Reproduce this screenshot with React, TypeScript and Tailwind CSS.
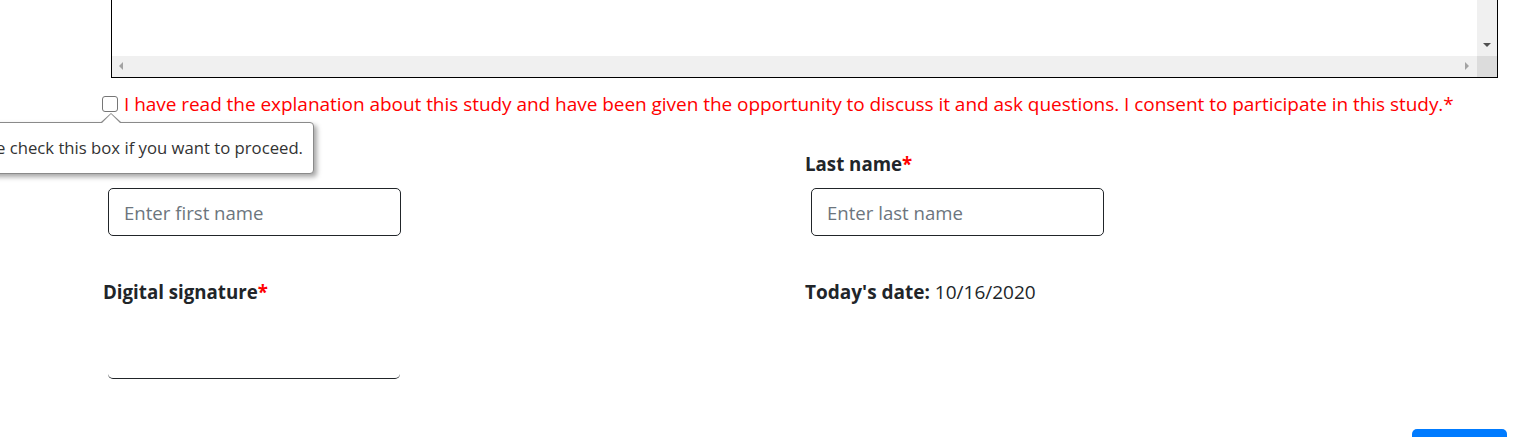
import React from "react";

const font = { fontFamily: '"Open Sans", "Noto Sans", sans-serif' };

const Label = ({ text, required = true }: { text: string; required?: boolean }) => (
  <label className="block h-[30px] text-[18.7px] font-bold leading-[30px] text-[#212529]">
    {text}
    {required && <span className="text-[#ff0000]">*</span>}
  </label>
);

const TextInput = ({ placeholder }: { placeholder: string }) => (
  <input
    type="text"
    placeholder={placeholder}
    className="block h-[48px] w-[293px] rounded-[5px] border border-[#212529] bg-white px-[15px] text-[18.6px] text-[#495057] outline-none placeholder:text-[#6c757d]"
  />
);

export default function App() {
  return (
    <div className="relative h-[437px] w-[1518px] overflow-hidden bg-white" style={font}>
      {/* Study explanation box (scrolled, top off screen) */}
      <div className="ml-[111px] flex h-[78px] w-[1387px] flex-col border-x border-b border-black">
        <div className="flex flex-1">
          <div className="flex-1" />
          <div className="relative w-[20px] bg-[#f0f0f0]">
            <div className="absolute bottom-[9px] left-[6px] h-0 w-0 border-x-[4px] border-t-[4px] border-x-transparent border-t-[#505050]" />
          </div>
        </div>
        <div className="flex h-[21px]">
          <div className="relative flex-1 bg-[#f0f0f0]">
            <div className="absolute left-[7px] top-[6px] h-0 w-0 border-y-[4px] border-r-[4px] border-y-transparent border-r-[#a3a3a3]" />
            <div className="absolute right-[8px] top-[6px] h-0 w-0 border-y-[4px] border-l-[4px] border-y-transparent border-l-[#a3a3a3]" />
          </div>
          <div className="w-[20px] bg-[#dcdcdc]" />
        </div>
      </div>

      {/* Consent checkbox */}
      <div className="mt-[11px] flex h-[30px] items-center pl-[102px]">
        <input
          type="checkbox"
          className="h-[16px] w-[16px] shrink-0 appearance-none rounded-[3px] border border-[#767676] bg-white"
        />
        <span className="ml-[6px] whitespace-nowrap text-[19px] leading-[30px] tracking-[-0.04px] text-[#ff0000]">
          I have read the explanation about this study and have been given the opportunity to discuss it and ask questions. I consent to participate in this study.*
        </span>
      </div>

      {/* Form fields */}
      <div className="mt-[30px] grid grid-cols-[702px_1fr] pl-[103px]">
        <div>
          <Label text="First name" />
          <div className="mt-[9px] pl-[5px]">
            <TextInput placeholder="Enter first name" />
          </div>
        </div>
        <div>
          <Label text="Last name" />
          <div className="mt-[9px] pl-[6px]">
            <TextInput placeholder="Enter last name" />
          </div>
        </div>

        <div className="mt-[41px]">
          <Label text="Digital signature" />
          <div className="mt-[10px] pl-[5px]">
            <div className="h-[62px] w-[292px] rounded-b-[5px] border-b border-[#212529]" />
          </div>
        </div>
        <div className="mt-[41px]">
          <p className="h-[30px] text-[19px] leading-[30px] text-[#212529]">
            <span className="font-bold">Today's date:</span> 10/16/2020
          </p>
        </div>
      </div>

      {/* Submit button (cut off at bottom) */}
      <div className="mt-[50px] flex justify-end pr-[11px]">
        <button className="h-[48px] w-[95px] rounded-[5px] bg-[#007bff] text-[19px] text-white">Submit</button>
      </div>

      {/* Browser validation bubble */}
      <div className="absolute right-[calc(100%-314px)] top-[122px]">
        <div className="absolute -top-[9px] left-[calc(100%-213px)] h-0 w-0 border-x-[10px] border-b-[9px] border-x-transparent border-b-[#8a8a8a]" />
        <div className="absolute -top-[8px] left-[calc(100%-212px)] h-0 w-0 border-x-[9px] border-b-[9px] border-x-transparent border-b-white" />
        <div className="whitespace-nowrap rounded-[4px] border border-[#8a8a8a] bg-white py-[13px] pl-[12px] pr-[10px] text-[16.7px] leading-[24px] text-[#333] shadow-[3px_3px_5px_rgba(0,0,0,0.35)]">
          Please check this box if you want to proceed.
        </div>
      </div>
    </div>
  );
}
